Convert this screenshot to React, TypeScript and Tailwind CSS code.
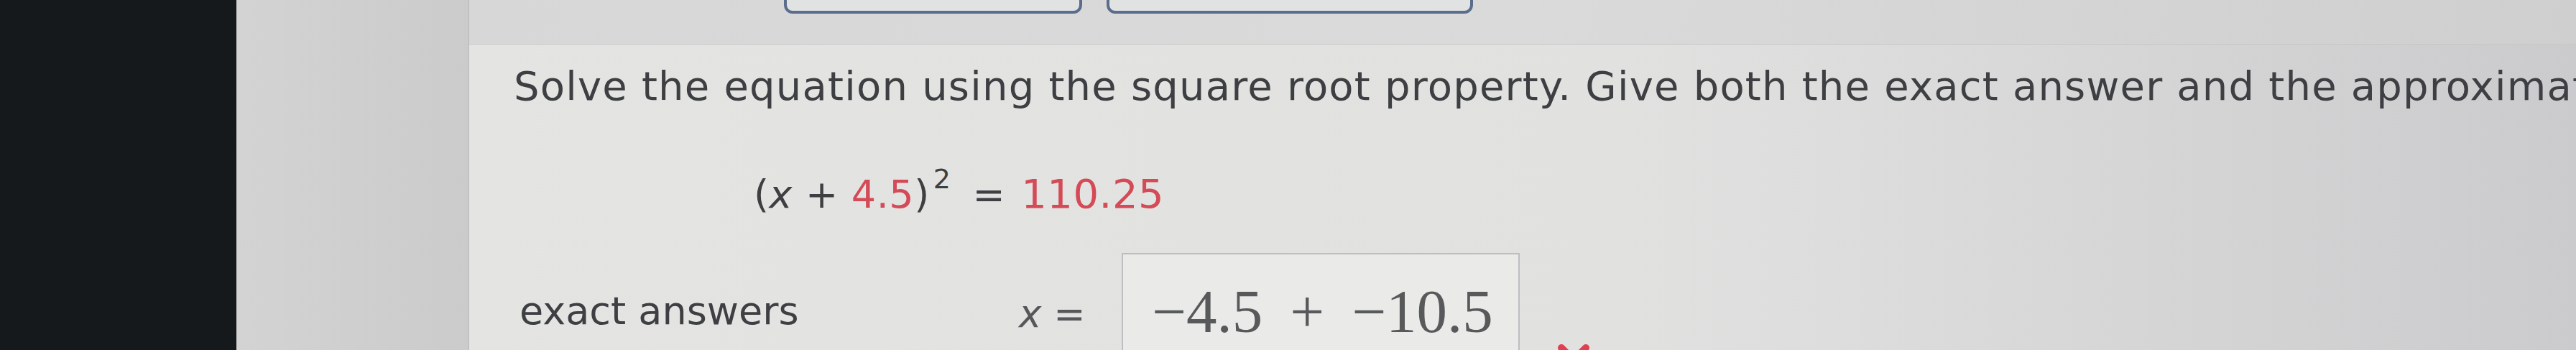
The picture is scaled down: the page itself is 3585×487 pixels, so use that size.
export default function App() {
  return (
    <div className="flex h-[487px] w-[3585px] overflow-hidden font-['DejaVu_Sans',sans-serif] text-[#3d3f42]">
      {/* dark bezel */}
      <div className="w-[329px] shrink-0 bg-[#15191c]" />
      {/* side column */}
      <div className="w-[324px] shrink-0 border-r border-[#b8b8b8] bg-gradient-to-r from-[#d3d3d3] to-[#cbcbcb]" />

      <div className="flex min-w-0 flex-1 flex-col">
        {/* toolbar strip */}
        <div className="flex h-[62px] shrink-0 items-start gap-[34px] border-b border-[#c6c6c6] bg-gradient-to-r from-[#d6d7d6] via-[#d9dad9] to-[#cfcfd0] pl-[438px]">
          <div className="-mt-[24px] h-[43px] w-[415px] rounded-b-[12px] border-[4px] border-[#5b6d8c] bg-[#e1e2e2]" />
          <div className="-mt-[24px] h-[43px] w-[510px] rounded-b-[12px] border-[4px] border-[#5b6d8c] bg-[#e1e2e2]" />
        </div>

        {/* question panel */}
        <div className="relative flex flex-1 flex-col bg-gradient-to-r from-[#e4e5e3] via-[#e1e2e0] via-55% to-[#cbcbcd] pl-[62px] pt-[27px]">
          <p className="whitespace-nowrap text-[56px] leading-[62px] tracking-[1.2px]">
            Solve the equation using the square root property. Give both the exact answer and the approximate answer.
          </p>

          <div className="ml-[334px] mt-[89px] flex items-baseline whitespace-nowrap text-[54px] leading-[60px] tracking-[0.5px]">
            <span>(</span>
            <span className="italic">x</span>
            <span className="px-[18px]">+</span>
            <span className="text-[#d44a56]">4.5</span>
            <span>)</span>
            <span className="relative -top-[27px] ml-[5px] text-[38px]">2</span>
            <span className="pl-[30px] pr-[22px]">=</span>
            <span className="text-[56px] tracking-[0.5px] text-[#d44a56]">110.25</span>
          </div>

          <div className="mt-[46px] flex items-start">
            <span className="mt-[51px] w-[703px] shrink-0 pl-[8px] text-[54px] leading-[60px]">exact answers</span>
            <span className="mt-[55px] w-[143px] shrink-0 whitespace-nowrap text-[53px] leading-[60px] text-[#55575a]">
              <span className="italic">x</span> =
            </span>
            <div className="h-[170px] w-[554px] shrink-0 border-2 border-[#bdbec0] bg-[#eaeae9] pl-[40px] pt-[31px]">
              <span className="whitespace-nowrap font-['Liberation_Serif',serif] text-[85px] leading-[96px] text-[#58595b]">
                −4.5<span className="mx-[38px]">+</span>−10.5
              </span>
            </div>
            <svg className="ml-[50px] mt-[124px] h-[50px] w-[50px] shrink-0" viewBox="0 0 50 50">
              <path d="M8 8 L42 42 M42 8 L8 42" stroke="#e0404f" strokeWidth="10" strokeLinecap="round" />
            </svg>
          </div>
        </div>
      </div>
    </div>
  );
}
